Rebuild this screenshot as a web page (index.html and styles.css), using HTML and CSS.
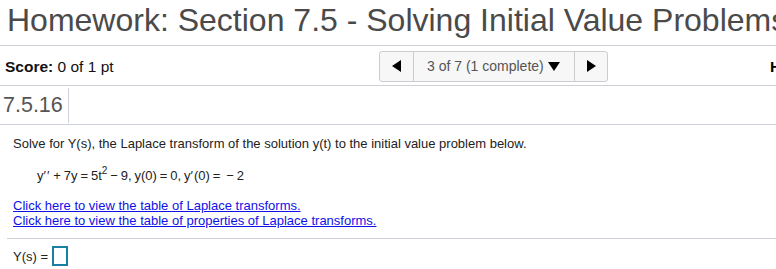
FILE: index.html
```html
<!DOCTYPE html>
<html>
<head>
<meta charset="utf-8">
<link rel="stylesheet" href="styles.css">
</head>
<body>
<h1 class="title">Homework: Section 7.5 - Solving Initial Value Problems</h1>
<div class="score-row">
  <div class="score"><b>Score:</b> 0 of 1 pt</div>
  <div class="nav">
    <span class="nav-btn nav-prev"><span class="tri tri-left"></span></span>
    <span class="nav-mid">3 of 7 (1 complete)<span class="tri tri-down"></span></span>
    <span class="nav-btn nav-next"><span class="tri tri-right"></span></span>
  </div>
  <div class="help"><b>Help Me Solve This</b></div>
</div>
<div class="qnum-row">
  <div class="qnum">7.5.16</div>
</div>
<div class="question">
  <p class="prompt">Solve for Y(s), the Laplace transform of the solution y(t) to the initial value problem below.</p>
  <p class="eq">y<span class="pr">′′</span> + 7y = 5t<sup>2</sup> − 9, y(0) = 0, y<span class="pr">′</span>(0) = &nbsp;− 2</p>
  <div class="links">
    <a href="#">Click here to view the table of Laplace transforms.</a><br>
    <a href="#">Click here to view the table of properties of Laplace transforms.</a>
  </div>
  <div class="answer">
    <span class="ans-label">Y(s) =</span><span class="ans-box"></span>
  </div>
</div>
</body>
</html>
```
FILE: styles.css
```css
html, body {
  margin: 0;
  padding: 0;
  background: #fff;
  overflow: hidden;
}
body {
  font-family: "Liberation Sans", Arial, sans-serif;
  color: #222;
  width: 776px;
}
.title {
  margin: 0;
  padding: 2px 0 7px 7px;
  font-size: 32px;
  line-height: 36px;
  font-weight: normal;
  color: #4a4a4a;
  white-space: nowrap;
  overflow: hidden;
  border-bottom: 1px solid #cdd1da;
}
.score-row {
  display: flex;
  align-items: center;
  height: 39px;
  border-bottom: 1px solid #cdd1da;
  white-space: nowrap;
  overflow: hidden;
}
.score {
  width: 374px;
  padding-left: 5px;
  padding-top: 2px;
  font-size: 15.5px;
  color: #111;
  flex: none;
}
.nav {
  flex: none;
  display: flex;
  height: 29px;
  border: 1px solid #ccc;
  border-radius: 3px;
  background: #f7f7f7;
  margin-top: 1px;
}
.nav-btn {
  display: flex;
  align-items: center;
  justify-content: center;
  width: 33px;
}
.nav-prev {
  border-right: 1px solid #ccc;
}
.nav-next {
  border-left: 1px solid #ccc;
  width: 32px;
}
.nav-mid {
  display: flex;
  align-items: center;
  width: 160px;
  padding-left: 13px;
  box-sizing: border-box;
  font-size: 14px;
  color: #555;
}
.tri {
  display: inline-block;
  width: 0;
  height: 0;
}
.tri-left {
  border-top: 6px solid transparent;
  border-bottom: 6px solid transparent;
  border-right: 9px solid #000;
  margin-left: -1px;
}
.tri-right {
  border-top: 6px solid transparent;
  border-bottom: 6px solid transparent;
  border-left: 9px solid #000;
  margin-left: 1px;
}
.tri-down {
  border-left: 6px solid transparent;
  border-right: 6px solid transparent;
  border-top: 9px solid #000;
  margin-left: 4px;
  margin-top: 1px;
}
.help {
  padding-left: 162px;
  padding-top: 2px;
  font-size: 15.5px;
  color: #000;
}
.qnum-row {
  display: flex;
  height: 38px;
  border-bottom: 1px solid #cdd1da;
  align-items: stretch;
}
.qnum {
  display: flex;
  align-items: center;
  padding: 0 5px 0 3px;
  margin: 2px 0 1px;
  border-right: 1px solid #cdd1da;
  font-size: 21.5px;
  color: #555;
}
.question {
  padding: 0 0 0 13px;
  font-size: 13px;
}
.prompt {
  margin: 0;
  padding-top: 11px;
  line-height: 16px;
  color: #222;
}
.eq {
  margin: 0;
  padding: 16px 0 0 24px;
  line-height: 16px;
  color: #222;
  word-spacing: -0.7px;
}
.eq sup {
  font-size: 10px;
  line-height: 0;
  vertical-align: 6px;
}
.pr {
  letter-spacing: 1px;
}
.links {
  padding-top: 14px;
  line-height: 15px;
}
.links a {
  color: #1010e8;
  text-decoration: underline;
}
.answer {
  margin: 10px 0 0 -6px;
  padding: 7px 0 0 6px;
  border-top: 1px solid #cdd1da;
  display: flex;
  align-items: center;
}
.ans-label {
  color: #222;
  font-size: 13px;
}
.ans-box {
  display: inline-block;
  width: 12px;
  height: 16px;
  border: 2px solid #1b7fa3;
  margin-left: 4px;
}
```
